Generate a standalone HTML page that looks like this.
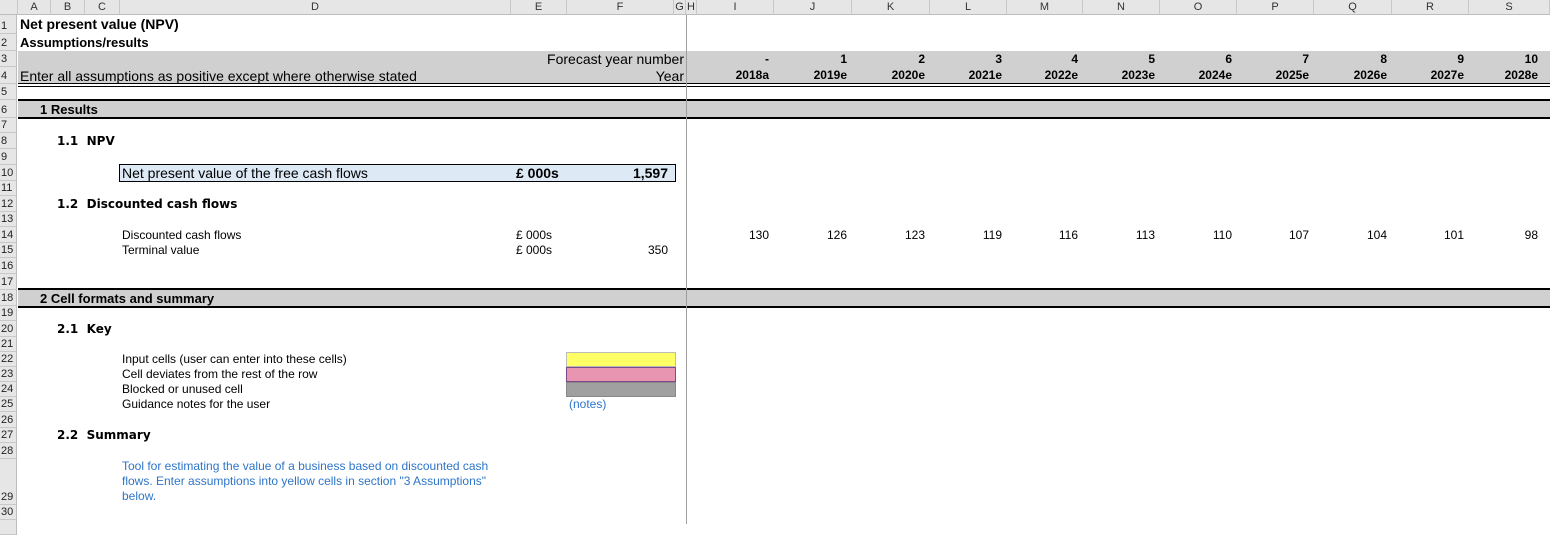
<!DOCTYPE html>
<html><head><meta charset="utf-8"><style>
*{margin:0;padding:0;box-sizing:border-box}
body{width:1550px;height:524px;overflow:hidden;background:#fff;position:relative;font-family:"Liberation Sans",Arial,sans-serif;color:#000}
.a{position:absolute;white-space:nowrap}
.ch{position:absolute;top:0;height:15px;background:#e6e6e6;border-right:1px solid #c8c8c8;border-bottom:1px solid #bdbdbd;font-size:11px;line-height:15px;text-align:center;color:#333}
.rh{position:absolute;left:0;width:17px;background:#e6e6e6;border-bottom:1px solid #c8c8c8;border-right:1px solid #bdbdbd;font-size:11px;color:#222;padding-left:1px;display:flex;align-items:flex-end;line-height:14px}
.n{font-family:"Liberation Sans Narrow","Liberation Sans",sans-serif}
.t{font-size:12px}
.h{font-family:"DejaVu Sans",Verdana,sans-serif;font-weight:bold;font-size:12px}
.r{text-align:right}
.blue{color:#2e75c8}
</style></head><body>
<!-- column headers -->
<div class="ch" style="left:0;width:18px"></div>
<div class="ch" style="left:18px;width:33px">A</div>
<div class="ch" style="left:51px;width:34px">B</div>
<div class="ch" style="left:85px;width:35px">C</div>
<div class="ch" style="left:120px;width:391px">D</div>
<div class="ch" style="left:511px;width:56px">E</div>
<div class="ch" style="left:567px;width:107px">F</div>
<div class="ch" style="left:674px;width:12px">G</div>
<div class="ch" style="left:686px;width:11px">H</div>
<div class="ch" style="left:697px;width:77px">I</div>
<div class="ch" style="left:774px;width:78px">J</div>
<div class="ch" style="left:852px;width:78px">K</div>
<div class="ch" style="left:930px;width:77px">L</div>
<div class="ch" style="left:1007px;width:76px">M</div>
<div class="ch" style="left:1083px;width:77px">N</div>
<div class="ch" style="left:1160px;width:77px">O</div>
<div class="ch" style="left:1237px;width:77px">P</div>
<div class="ch" style="left:1314px;width:78px">Q</div>
<div class="ch" style="left:1392px;width:77px">R</div>
<div class="ch" style="left:1469px;width:81px">S</div>
<!-- row headers -->
<div class="rh" style="top:15px;height:19px">1</div>
<div class="rh" style="top:34px;height:17px">2</div>
<div class="rh" style="top:51px;height:16px">3</div>
<div class="rh" style="top:67px;height:17px">4</div>
<div class="rh" style="top:84px;height:16px">5</div>
<div class="rh" style="top:100px;height:18px">6</div>
<div class="rh" style="top:118px;height:15px">7</div>
<div class="rh" style="top:133px;height:16px">8</div>
<div class="rh" style="top:149px;height:16px">9</div>
<div class="rh" style="top:165px;height:16px">10</div>
<div class="rh" style="top:181px;height:15px">11</div>
<div class="rh" style="top:196px;height:16px">12</div>
<div class="rh" style="top:212px;height:15px">13</div>
<div class="rh" style="top:227px;height:16px">14</div>
<div class="rh" style="top:243px;height:15px">15</div>
<div class="rh" style="top:258px;height:16px">16</div>
<div class="rh" style="top:274px;height:16px">17</div>
<div class="rh" style="top:290px;height:16px">18</div>
<div class="rh" style="top:306px;height:15px">19</div>
<div class="rh" style="top:321px;height:16px">20</div>
<div class="rh" style="top:337px;height:15px">21</div>
<div class="rh" style="top:352px;height:15px">22</div>
<div class="rh" style="top:367px;height:15px">23</div>
<div class="rh" style="top:382px;height:15px">24</div>
<div class="rh" style="top:397px;height:15px">25</div>
<div class="rh" style="top:412px;height:16px">26</div>
<div class="rh" style="top:428px;height:15px">27</div>
<div class="rh" style="top:443px;height:16px">28</div>
<div class="rh" style="top:459px;height:46px">29</div>
<div class="rh" style="top:505px;height:15px">30</div>
<div class="rh" style="top:520px;height:15px"></div>
<!-- grey bands -->
<div class="a" style="left:18px;top:51px;width:1532px;height:33px;background:#d0d0d0"></div>
<div class="a" style="left:18px;top:83px;width:1532px;height:2px;border-top:1px solid #000;border-bottom:1px solid #000;height:4px"></div>
<div class="a" style="left:18px;top:99px;width:1532px;height:20px;background:#d0d0d0;border-top:2px solid #000;border-bottom:2px solid #000"></div>
<div class="a" style="left:18px;top:288px;width:1532px;height:20px;background:#d0d0d0;border-top:2px solid #000;border-bottom:2px solid #000"></div>
<!-- frozen line -->
<div class="a" style="left:686px;top:15px;width:1px;height:509px;background:#9e9e9e"></div>
<!-- text -->
<div class="a n" style="left:20px;top:16px;font-size:14px;font-weight:bold">Net present value (NPV)</div>
<div class="a n" style="left:20px;top:35px;font-size:13px;font-weight:bold">Assumptions/results</div>
<div class="a n r" style="right:866px;top:51px;font-size:14px">Forecast year number</div>
<div class="a n" style="left:20px;top:68px;font-size:14px">Enter all assumptions as positive except where otherwise stated</div>
<div class="a n r" style="right:866px;top:68px;font-size:14px">Year</div>
<div class="a n" style="left:40px;top:102px;font-size:13px;font-weight:bold">1 Results</div>
<div class="a h" style="left:57px;top:134px">1.1&nbsp; NPV</div>
<div class="a" style="left:119px;top:164px;width:557px;height:18px;background:#dde9f5;border:1px solid #000"></div>
<div class="a n" style="left:122px;top:165px;font-size:14px">Net present value of the free cash flows</div>
<div class="a n" style="left:516px;top:165px;font-size:14px;font-weight:bold">£ 000s</div>
<div class="a n r" style="right:882px;top:165px;font-size:14px;font-weight:bold">1,597</div>
<div class="a h" style="left:57px;top:197px">1.2&nbsp; Discounted cash flows</div>
<div class="a n t" style="left:122px;top:228px">Discounted cash flows</div>
<div class="a n t" style="left:516px;top:228px">£ 000s</div>
<div class="a n t" style="left:122px;top:243px">Terminal value</div>
<div class="a n t" style="left:516px;top:243px">£ 000s</div>
<div class="a n t r" style="right:882px;top:243px">350</div>
<div class="a n" style="left:40px;top:291px;font-size:13px;font-weight:bold">2 Cell formats and summary</div>
<div class="a h" style="left:57px;top:322px">2.1&nbsp; Key</div>
<div class="a n t" style="left:122px;top:352px">Input cells (user can enter into these cells)</div>
<div class="a n t" style="left:122px;top:367px">Cell deviates from the rest of the row</div>
<div class="a n t" style="left:122px;top:382px">Blocked or unused cell</div>
<div class="a n t" style="left:122px;top:397px">Guidance notes for the user</div>
<div class="a" style="left:566px;top:352px;width:110px;height:15px;background:#ffff66;border:1px solid #bbb"></div>
<div class="a" style="left:566px;top:367px;width:110px;height:15px;background:#e795b0;border:1px solid #7a4a8a"></div>
<div class="a" style="left:566px;top:382px;width:110px;height:15px;background:#a0a0a0;border:1px solid #888"></div>
<div class="a n t blue" style="left:569px;top:397px">(notes)</div>
<div class="a h" style="left:57px;top:428px">2.2&nbsp; Summary</div>
<div class="a n t blue" style="left:122px;top:459px;line-height:15px">Tool for estimating the value of a business based on discounted cash<br>flows. Enter assumptions into yellow cells in section "3 Assumptions"<br>below.</div>
<!-- year columns -->
<div class="a n r" style="left:697px;width:72px;top:52px;font-size:12px;font-weight:bold">-</div>
<div class="a n r" style="left:697px;width:72px;top:68px;font-size:12px;font-weight:bold">2018a</div>
<div class="a n r" style="left:697px;width:72px;top:228px;font-size:12px">130</div>
<div class="a n r" style="left:774px;width:73px;top:52px;font-size:12px;font-weight:bold">1</div>
<div class="a n r" style="left:774px;width:73px;top:68px;font-size:12px;font-weight:bold">2019e</div>
<div class="a n r" style="left:774px;width:73px;top:228px;font-size:12px">126</div>
<div class="a n r" style="left:852px;width:73px;top:52px;font-size:12px;font-weight:bold">2</div>
<div class="a n r" style="left:852px;width:73px;top:68px;font-size:12px;font-weight:bold">2020e</div>
<div class="a n r" style="left:852px;width:73px;top:228px;font-size:12px">123</div>
<div class="a n r" style="left:930px;width:72px;top:52px;font-size:12px;font-weight:bold">3</div>
<div class="a n r" style="left:930px;width:72px;top:68px;font-size:12px;font-weight:bold">2021e</div>
<div class="a n r" style="left:930px;width:72px;top:228px;font-size:12px">119</div>
<div class="a n r" style="left:1007px;width:71px;top:52px;font-size:12px;font-weight:bold">4</div>
<div class="a n r" style="left:1007px;width:71px;top:68px;font-size:12px;font-weight:bold">2022e</div>
<div class="a n r" style="left:1007px;width:71px;top:228px;font-size:12px">116</div>
<div class="a n r" style="left:1083px;width:72px;top:52px;font-size:12px;font-weight:bold">5</div>
<div class="a n r" style="left:1083px;width:72px;top:68px;font-size:12px;font-weight:bold">2023e</div>
<div class="a n r" style="left:1083px;width:72px;top:228px;font-size:12px">113</div>
<div class="a n r" style="left:1160px;width:72px;top:52px;font-size:12px;font-weight:bold">6</div>
<div class="a n r" style="left:1160px;width:72px;top:68px;font-size:12px;font-weight:bold">2024e</div>
<div class="a n r" style="left:1160px;width:72px;top:228px;font-size:12px">110</div>
<div class="a n r" style="left:1237px;width:72px;top:52px;font-size:12px;font-weight:bold">7</div>
<div class="a n r" style="left:1237px;width:72px;top:68px;font-size:12px;font-weight:bold">2025e</div>
<div class="a n r" style="left:1237px;width:72px;top:228px;font-size:12px">107</div>
<div class="a n r" style="left:1314px;width:73px;top:52px;font-size:12px;font-weight:bold">8</div>
<div class="a n r" style="left:1314px;width:73px;top:68px;font-size:12px;font-weight:bold">2026e</div>
<div class="a n r" style="left:1314px;width:73px;top:228px;font-size:12px">104</div>
<div class="a n r" style="left:1392px;width:72px;top:52px;font-size:12px;font-weight:bold">9</div>
<div class="a n r" style="left:1392px;width:72px;top:68px;font-size:12px;font-weight:bold">2027e</div>
<div class="a n r" style="left:1392px;width:72px;top:228px;font-size:12px">101</div>
<div class="a n r" style="left:1469px;width:69px;top:52px;font-size:12px;font-weight:bold">10</div>
<div class="a n r" style="left:1469px;width:69px;top:68px;font-size:12px;font-weight:bold">2028e</div>
<div class="a n r" style="left:1469px;width:69px;top:228px;font-size:12px">98</div>
</body></html>
